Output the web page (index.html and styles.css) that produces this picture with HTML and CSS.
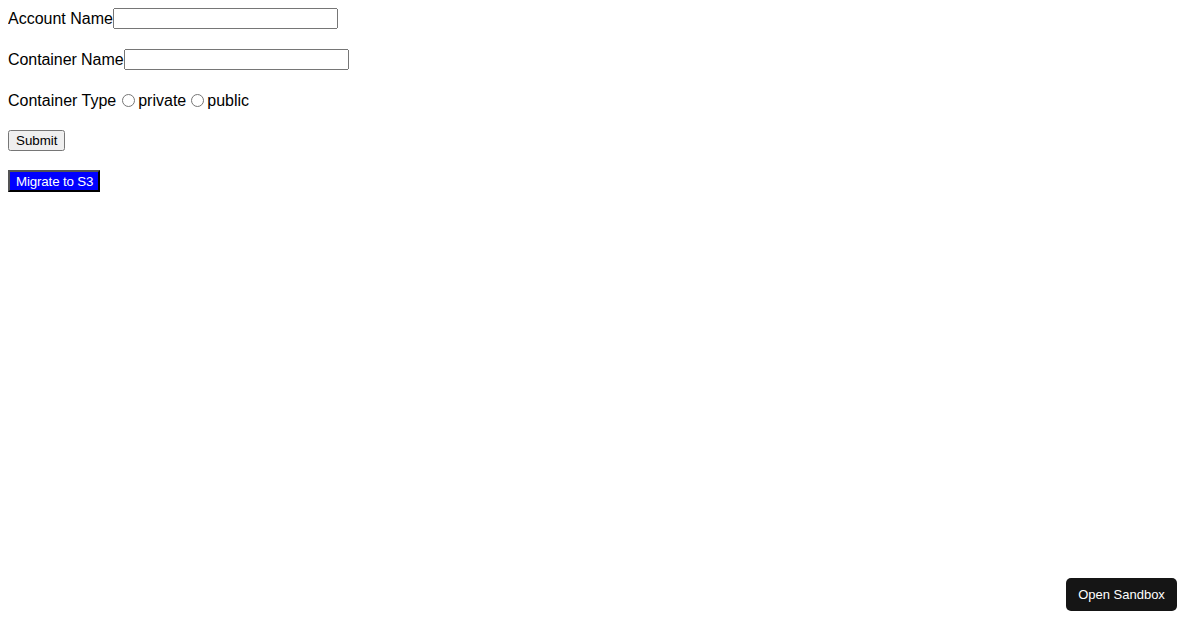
FILE: index.html
```html
<!DOCTYPE html>
<html>
<head>
<meta charset="utf-8">
<link rel="stylesheet" href="styles.css">
</head>
<body>
<form class="form">
  <div class="row"><label for="acc">Account Name</label><input id="acc" type="text" class="field"></div>
  <div class="row"><label for="cont" class="cont-label">Container Name</label><input id="cont" type="text" class="field"></div>
  <div class="row row-radio">Container Type<input type="radio" name="t" id="priv" class="radio"><label for="priv">private</label><input type="radio" name="t" id="pub" class="radio radio-second"><label for="pub">public</label></div>
  <div class="row row-submit"><button type="button" class="btn submit">Submit</button></div>
  <div class="row row-migrate"><button type="button" class="btn migrate">Migrate to S3</button></div>
</form>
<button type="button" class="sandbox">Open Sandbox</button>
</body>
</html>
```
FILE: styles.css
```css
html, body {
  background: #ffffff;
}
body {
  margin: 8px;
  font-family: "Liberation Sans", Arial, sans-serif;
  font-size: 16px;
  color: #000000;
}
.form {
  display: flex;
  flex-direction: column;
}
.row {
  height: 21px;
  line-height: 21px;
  margin-bottom: 20px;
  white-space: nowrap;
}
.row-radio {
  margin-bottom: 19px;
}
.row-submit {
  height: 21px;
  margin-bottom: 19px;
}
.row-migrate {
  height: 22px;
  margin-bottom: 0;
}
.cont-label {
  letter-spacing: -0.07px;
}
.field {
  vertical-align: top;
  box-sizing: border-box;
  width: 225px;
  height: 21px;
  font-family: "Liberation Sans", Arial, sans-serif;
}
.radio {
  vertical-align: middle;
  margin: -2px 3px 0 6px;
}
.radio-second {
  margin-left: 5px;
}
.btn {
  font-family: "Liberation Sans", Arial, sans-serif;
  font-size: 13.333px;
  vertical-align: top;
  box-sizing: border-box;
  line-height: normal;
}
.submit {
  height: 21px;
}
.migrate {
  height: 22px;
  padding: 1px 5px 1px 6px;
  background: #0000ff;
  color: #ffffff;
  letter-spacing: -0.15px;
}
.sandbox {
  position: fixed;
  right: 23px;
  bottom: 19px;
  width: 111px;
  height: 33px;
  background: #151515;
  color: #ffffff;
  border: none;
  border-radius: 5px;
  font-family: "Liberation Sans", Arial, sans-serif;
  font-size: 13px;
  padding: 0;
}
```
